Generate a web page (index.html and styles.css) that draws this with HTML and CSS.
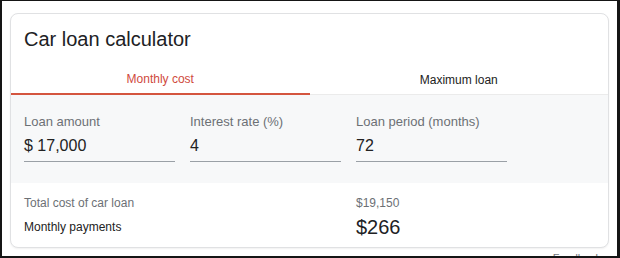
FILE: index.html
```html
<!DOCTYPE html>
<html>
<head>
<meta charset="utf-8">
<link rel="stylesheet" href="styles.css">
</head>
<body>
<div class="frame">
  <div class="card">
    <div class="title">Car loan calculator</div>
    <div class="tabs">
      <div class="tab active">Monthly cost</div>
      <div class="tab">Maximum loan</div>
    </div>
    <div class="fields">
      <div class="field">
        <div class="label">Loan amount</div>
        <div class="input">$ 17,000</div>
      </div>
      <div class="field">
        <div class="label">Interest rate (%)</div>
        <div class="input">4</div>
      </div>
      <div class="field">
        <div class="label">Loan period (months)</div>
        <div class="input">72</div>
      </div>
    </div>
    <div class="results">
      <div class="row">
        <div class="rlabel muted">Total cost of car loan</div>
        <div class="rvalue total">$19,150</div>
      </div>
      <div class="row">
        <div class="rlabel">Monthly payments</div>
        <div class="rvalue big">$266</div>
      </div>
    </div>
  </div>
  <div class="feedback">Feedback</div>
</div>
</body>
</html>
```
FILE: styles.css
```css
* { box-sizing: border-box; }
html, body {
  margin: 0;
  padding: 0;
  width: 620px;
  height: 258px;
  overflow: hidden;
  background: #111;
  font-family: "Liberation Sans", Arial, sans-serif;
}
.frame {
  width: 620px;
  height: 258px;
  border-style: solid;
  border-color: #151515;
  border-width: 1px 3px 2px 2px;
  background: #fff;
  padding: 12px 0 0 8px;
  overflow: hidden;
}
.card {
  width: 599px;
  height: 235px;
  border: 1px solid #e0e1e3;
  border-radius: 8px;
  background: #fff;
  overflow: hidden;
  box-shadow: 0 1px 2px rgba(0,0,0,0.06);
}
.title {
  padding: 13px 13px 12px;
  font-size: 20px;
  line-height: 24px;
  color: #202124;
}
.tabs {
  display: flex;
  height: 32px;
  border-bottom: 1px solid #ebebeb;
}
.tab {
  flex: 1;
  display: flex;
  align-items: center;
  justify-content: center;
  font-size: 12px;
  color: #222;
  padding-top: 2px;
}
.tab.active {
  color: #cf4a3c;
  border-bottom: 2px solid #d4553f;
  margin-bottom: -1px;
}
.fields {
  background: #f7f8f9;
  display: grid;
  grid-template-columns: repeat(3, 151px);
  column-gap: 15px;
  padding: 19px 13px 21px;
}
.label {
  font-size: 13px;
  line-height: 16px;
  color: #6c7075;
}
.input {
  margin-top: 6px;
  font-size: 16px;
  line-height: 20px;
  color: #222;
  padding-bottom: 5px;
  border-bottom: 1px solid #9aa0a6;
}
.results {
  padding: 12px 13px 0;
}
.row {
  display: grid;
  grid-template-columns: 332px 1fr;
  align-items: center;
}
.row + .row {
  margin-top: 4px;
}
.rlabel {
  font-size: 12px;
  line-height: 16px;
  color: #222;
}
.rlabel.muted {
  color: #6c7075;
}
.total {
  font-size: 12px;
  line-height: 16px;
  color: #6c7075;
}
.big {
  font-size: 20px;
  line-height: 24px;
  color: #202124;
}
.feedback {
  width: 599px;
  text-align: right;
  padding-right: 8px;
  margin-top: 3px;
  font-size: 11px;
  line-height: 14px;
  color: #70757a;
}
```
